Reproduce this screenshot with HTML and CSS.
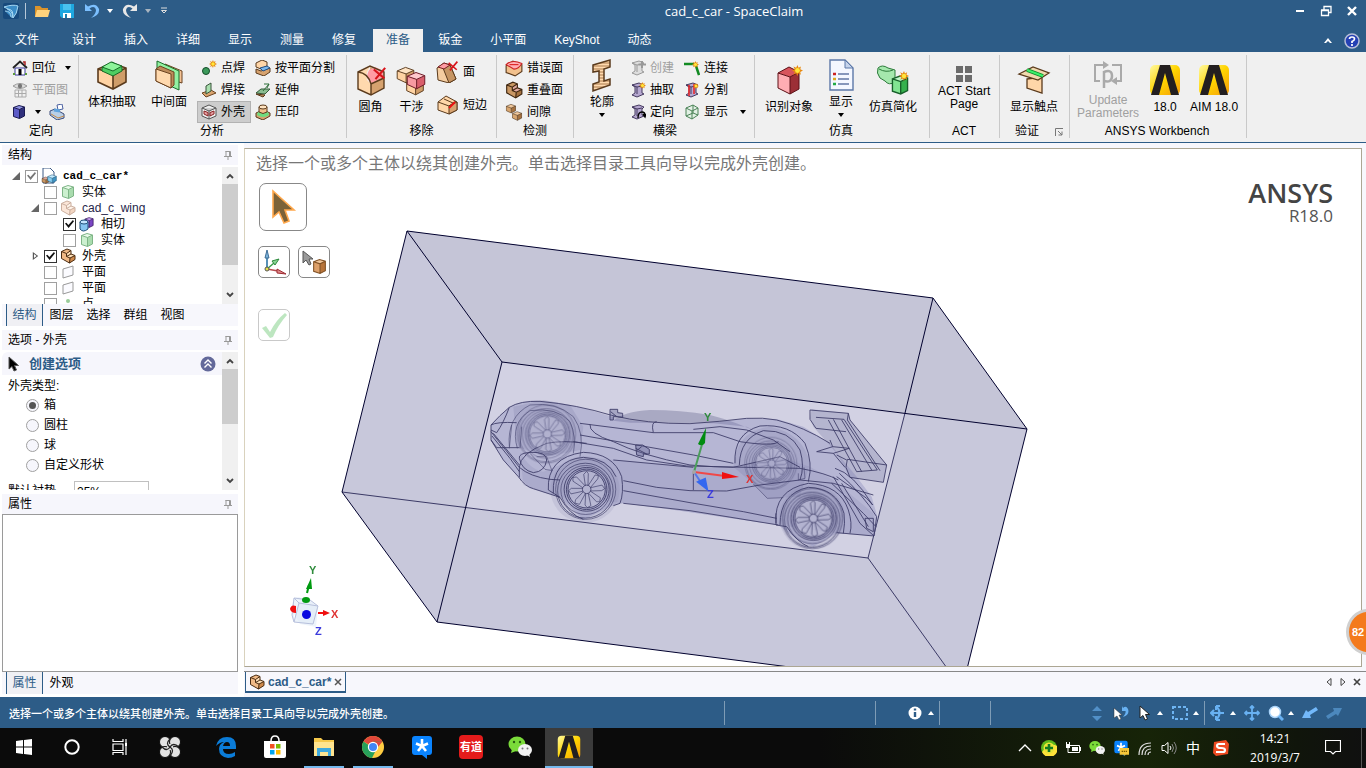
FILE: index.html
```html
<!DOCTYPE html>
<html lang="zh-CN">
<head>
<meta charset="utf-8">
<title>cad_c_car - SpaceClaim</title>
<link rel="stylesheet" href="styles.css">
</head>
<body>
<svg class="sprite" aria-hidden="true">
  <symbol id="box" viewBox="0 0 32 32"><path d="M2 10 16 4 30 9 17 15Z" fill="var(--t)"/><path d="M2 10 17 15V30L2 23Z" fill="var(--l)"/><path d="M17 15 30 9V23L17 30Z" fill="var(--r)"/><path d="M2 10 16 4 30 9V23L17 30 2 23ZM2 10 17 15 30 9M17 15V30" fill="none" stroke="var(--s)" stroke-width="1.6"/></symbol>
  <symbol id="tall" viewBox="0 0 16 16"><path d="M2.500 3.500 8 1.500 13.500 3 8.500 5.500Z" fill="var(--t)"/><path d="M2.500 3.500 8.500 5.500V14.500L2.500 12.500Z" fill="var(--l)"/><path d="M8.500 5.500 13.500 3V12L8.500 14.500Z" fill="var(--r)"/><path d="M2.500 3.500 8 1.500 13.500 3V12L8.500 14.500 2.500 12.500ZM2.500 3.500 8.500 5.500 13.500 3M8.500 5.500V14.500" fill="none" stroke="var(--s)"/></symbol>
  <symbol id="steps" viewBox="0 0 32 32"><path d="M3 7 14 2 22 5V12L30 15V23L19 30 3 21Z" fill="var(--l)"/><path d="M13 11 22 6V12L30 15 20 20 13 17Z" fill="var(--t)"/><path d="M20 20 30 15V23L19 30Z" fill="var(--r)"/><path d="M3 7 14 2 22 5V12L30 15V23L19 30 3 21ZM3 7 13 11 22 5M13 11V17L20 20 30 15M20 20 19 30M13 17 22 12" fill="none" stroke="var(--s)" stroke-width="2"/></symbol>
  <symbol id="ibeam" viewBox="0 0 16 16"><path d="M2 3 9 1 14 3 12 5V11L14 12 7 15 2 13 5 11V5Z" fill="var(--l)" stroke="var(--s)"/><path d="M2 3 7 5V12M7 5 12 4" fill="none" stroke="var(--s)"/></symbol>
  <symbol id="spark" viewBox="0 0 16 16"><path d="M8 0 9.5 4 13 2 12 6 16 8 12 10 13 14 9 12 8 16 6 12 2 14 4 10 0 8 4 6 2 2 6 4Z" fill="#e88a10"/><circle cx="8" cy="8" r="3.5" fill="#ffe63a"/></symbol>
  <symbol id="cross" viewBox="0 0 16 16"><path d="M1 3 14 14M15 1 3 15" stroke="#d8151c" stroke-width="2.6" fill="none"/></symbol>
  <symbol id="ansys" viewBox="0 0 32 32"><defs><linearGradient id="gold" x1="0" y1="0" x2="1" y2="1"><stop offset="0" stop-color="#fff9a0"/><stop offset=".5" stop-color="#ffd400"/><stop offset="1" stop-color="#f59b0c"/></linearGradient></defs><rect x="1" y="1" width="30" height="30" rx="5" fill="url(#gold)"/><path d="M11 1H21L30 31H22L16 9 10 31H2Z" fill="#231f20"/></symbol>
  <symbol id="cursor" viewBox="0 0 16 16"><path d="M3 1V13L6 10.500 8 15 10.500 14 8.500 9.500H12.500Z" fill="var(--l)" stroke="var(--s)"/></symbol>
  <symbol id="pin" viewBox="0 0 10 10"><path d="M2.500 1.500H7.500V6.500M3 1V6.500M1 6.500H9M5 7V10M6.500 1V6" stroke="#999" fill="none"/></symbol>
  <symbol id="plane" viewBox="0 0 16 16"><path d="M3 5 13 2V11L3 14Z" fill="#fbfbff" stroke="#999"/></symbol>
  <symbol id="wechat" viewBox="0 0 24 24"><ellipse cx="9" cy="9" rx="8.500" ry="7.500" fill="#7bdb3a"/><path d="M4 14 3 18 8 16Z" fill="#7bdb3a"/><ellipse cx="17" cy="15" rx="7" ry="6" fill="#f2f2f2"/><path d="M19 20 22 22 21 18Z" fill="#f2f2f2"/><circle cx="6" cy="7" r="1.200" fill="#265c10"/><circle cx="12" cy="7" r="1.200" fill="#265c10"/><circle cx="14.500" cy="13.500" r="1" fill="#777"/><circle cx="19.500" cy="13.500" r="1" fill="#777"/></symbol>
  <symbol id="star" viewBox="0 0 24 24"><path d="M5 1H19Q22 1 22 4V17Q22 20 19 20H17V24L12 20H5Q2 20 2 17V4Q2 1 5 1Z" fill="#0a84ff"/><path d="M12 4V11M6 8.500 12 11 18 8.500M8 16 12 11 16 16" stroke="#fff" stroke-width="2.600" fill="none"/></symbol>
  <symbol id="wheel" viewBox="-100 -100 200 200">
    <g fill="none" stroke="#3b3a66" stroke-width="2.600"><circle r="62" fill="#9c9cc0" fill-opacity=".15"/><circle r="57" fill="#d0d0e6" fill-opacity=".35"/><ellipse rx="69" ry="67"/><ellipse cx="-3" cy="2" rx="76" ry="75" stroke-opacity=".7"/><ellipse cx="-4" cy="4" rx="85" ry="84" stroke-opacity=".85"/><ellipse cx="-3" cy="0" rx="92" ry="92" stroke-opacity=".7"/><circle r="13"/></g>
    <path fill="none" stroke="#3b3a66" stroke-width="2" d="M-4-12-9-46 0-55 5-48 4-12M5-12 26-44 36-42 34-32 12-6M12-5 47-13 55-2 46 4 12 5M12 6 42 26 40 38 30 38 6 12M5 13 13 50 2 56-5 48-3 13M-4 13-22 46-36 42-34 32-11 8M-12 6-48 14-55 4-47-3-13-3M-12-5-42-25-42-36-31-38-6-12"/>
  </symbol>
</svg>

<header class="top">
  <div class="titlebar">
    <div class="quick">
      <svg class="i16" viewBox="0 0 16 16"><rect width="16" height="16" rx="2" fill="#174a7d"/><path d="M1 4Q10 1 15 3 14 11 10 15 11 8 1 4ZM2 8Q8 8 8 14M4 6Q12 6 9 15" fill="#3c8dc7" stroke="#a5d8f4"/></svg>
      <i class="vline"></i>
      <button aria-label="打开"><svg class="i16" viewBox="0 0 16 16"><path d="M1 14V3H6L8 5H14V14Z" fill="#d9932c"/><path d="M1 14 3 7H16L14 14Z" fill="#ffd27c"/></svg></button>
      <button aria-label="保存"><svg class="i16" viewBox="0 0 16 16"><path d="M1 1H15V15H3L1 13Z" fill="#1ea7e0"/><path d="M4 1H12V7H4Z" fill="#49c2ef"/><path d="M4 10H12V15H4Z" fill="#fff"/><path d="M6 11H8V15H6Z" fill="#1b7fae"/></svg></button>
      <button aria-label="撤消"><svg class="i16" viewBox="0 0 16 16"><path d="M1 1V8H8L5.500 5.500Q11 2 12 7 12 11 7 15 16 12 15 6 12-1 4 3.500Z" fill="#7cc0ff"/></svg><i class="down"></i></button>
      <button aria-label="重做"><svg class="i16" viewBox="0 0 16 16"><path d="M15 1V8H8L10.500 5.500Q5 2 4 7 4 11 9 15 0 12 1 6 4-1 12 3.500Z" fill="#e7e7e7"/></svg><i class="down dim"></i></button>
      <button aria-label="自定义"><svg class="i8" viewBox="0 0 8 8"><path d="M1 1H7M1.500 3.500H6.500L4 6Z" stroke="#ddd" fill="none"/></svg></button>
    </div>
    <h1>cad_c_car - SpaceClaim</h1>
    <div class="winctl">
      <button aria-label="最小化"><svg class="i12" viewBox="0 0 12 12"><path d="M2 6H10" stroke="#fff" stroke-width="2"/></svg></button>
      <button aria-label="还原"><svg class="i12" viewBox="0 0 12 12"><path d="M1.500 5.500H8.500V10.500H1.500ZM4 5V1.500H11V7.500H9M1 5H9M4 1.500H11" stroke="#fff" fill="none" stroke-width="1.300"/></svg></button>
      <button aria-label="关闭"><svg class="i12" viewBox="0 0 12 12"><path d="M2 2 10 10M10 2 2 10" stroke="#fff" stroke-width="2.400"/></svg></button>
    </div>
  </div>
  <nav class="tabs">
    <button class="file">文件</button><button>设计</button><button>插入</button><button>详细</button><button>显示</button><button>测量</button><button>修复</button><button class="on">准备</button><button>钣金</button><button>小平面</button><button>KeyShot</button><button>动态</button>
    <span class="tabs-end">
      <button aria-label="折叠功能区"><svg class="i8" viewBox="0 0 8 8"><path d="M0 6 4 1 8 6H6L4 4 2 6Z" fill="#fff"/></svg></button>
      <button aria-label="帮助"><svg class="i16" viewBox="0 0 16 16"><circle cx="8" cy="8" r="7" fill="#2440b4" stroke="#b8bfd8" stroke-width="1.500"/><path d="M5.500 6Q5.500 4 8 4 10.500 4 10.500 6 10.500 7.500 8 8.500V10M8 11V13" stroke="#fff" stroke-width="1.700" fill="none"/></svg></button>
    </span>
  </nav>
</header>

<section class="ribbon">
  <div class="group g-orient">
    <div class="body"><div class="col">
      <button class="sm"><svg class="i16" viewBox="0 0 16 16"><path d="M3 8H13V15H3Z" fill="#fff" stroke="#3b3a99"/><path d="M1 8 8 1.500 15 8" stroke="#222" stroke-width="1.800" fill="none"/><path d="M11 2H13V5" stroke="#a22" stroke-width="1.500" fill="none"/><path d="M6.500 9H9.500V15H6.500Z"/><path d="M1 14H3M13 14H15" stroke="#5a9a3a" stroke-width="2"/></svg>回位<i class="down"></i></button>
      <button class="sm" disabled><svg class="i16" viewBox="0 0 16 16"><path d="M1 4Q8-1 15 4 8 9 1 4Z" fill="#ddd" stroke="#999"/><circle cx="8" cy="4" r="2.200" fill="#777"/><path d="M3 8H14V15H3ZM6.500 8V15M10 8V15M3 11.500H14" stroke="#aaa" fill="none"/></svg>平面图</button>
      <span class="pair">
        <button class="sm" aria-label="视图"><svg class="i16 violet"><use href="#tall"/></svg><i class="down"></i></button>
        <button class="sm" aria-label="对齐"><svg class="i16" viewBox="0 0 16 16"><path d="M1 7 6 5 15 10V14L8 16 1 11Z" fill="#b9cfe6" stroke="#3a4b7b"/><path d="M2 10 9 14 15 12" stroke="#c58b4a" fill="none"/><path d="M8 1 13 0 14 5 9 6Z" fill="#fff" stroke="#4a5fa0"/><path d="M5 6 11 7" stroke="#5fa4de" stroke-width="3"/></svg></button>
      </span>
    </div></div>
    <h2>定向</h2>
  </div>
  <div class="group g-analyse">
    <div class="body">
      <button class="big w58"><svg class="i32 tan" viewBox="0 0 32 32"><use href="#box"/><path d="M6 9 16 3 26 8V12L17 17 6 12Z" fill="#4fce62" stroke="#176d28"/><path d="M6 8 15 3 26 7 17 12Z" fill="#8df49a" stroke="#176d28"/></svg>体积抽取</button>
      <button class="big w56"><svg class="i32" viewBox="0 0 32 32"><path d="M12 5 29 12V24L12 19Z" fill="#f5c497" stroke="#6b4320"/><path d="M4 2 26 12V31L4 21Z" fill="#92f2a2" stroke="#176d28"/><path d="M3 10 7 7 21 13V26L18 29 3 22Z" fill="#bd8b5a" stroke="#6b4320"/><path d="M3 10 18 15V29L3 22Z" fill="#ffd9ae" stroke="#6b4320"/></svg>中间面</button>
      <div class="col">
        <button class="sm"><svg class="i16" viewBox="0 0 16 16"><circle cx="5" cy="11" r="3.500" fill="#3c9a5b" stroke="#144c28"/><use href="#spark" x="8" y="0" width="8" height="8"/></svg>点焊</button>
        <button class="sm"><svg class="i16" viewBox="0 0 16 16"><path d="M1 11 10 8 15 11 5 15Z" fill="#d9a36e" stroke="#6b4320"/><path d="M5 4 10 1V9L5 12Z" fill="#a9dfae" stroke="#39543b"/></svg>焊接</button>
        <button class="sm on"><svg class="i16" viewBox="0 0 16 16"><path d="M1 4 8 1 15 4V12L8 15 1 12ZM1 4 8 7 15 4M8 7V15" fill="#eee" stroke="#555"/><path d="M3 7 7 8.500V12L3 10ZM9 8.500 13 7V10L9 12Z" fill="#e6a0a4" stroke="#822"/></svg>外壳</button>
      </div>
      <div class="col">
        <button class="sm"><svg class="i16" viewBox="0 0 16 16"><path d="M1 3 7 0 12 2V6L6 9 1 7Z" fill="#ffd6a8" stroke="#5a3a1c"/><path d="M1 9 6 11 15 8V12L9 16 1 13Z" fill="#d6a26f" stroke="#5a3a1c"/><path d="M5 8 12 6 15 8 8 11Z" fill="#7db9ee" stroke="#234f82"/></svg>按平面分割</button>
        <button class="sm"><svg class="i16" viewBox="0 0 16 16"><path d="M1 11 6 7H15L10 12Z" fill="#8bbd91" stroke="#345b3a"/><path d="M1 12 10 13 8 15Z" fill="#c99763" stroke="#5a3a1c"/><path d="M8 9 14 2M9 2 14 2 12 6" stroke="#2f6f3a" fill="none"/></svg>延伸</button>
        <button class="sm"><svg class="i16" viewBox="0 0 16 16"><path d="M1 9 8 6 15 9V12L8 16 1 13Z" fill="#d6a26f" stroke="#5a3a1c"/><ellipse cx="8" cy="10" rx="6" ry="3" fill="#6edc80"/><path d="M4 3V8Q8 11 12 8V3Z" fill="#f2c18d" stroke="#5a3a1c"/><ellipse cx="8" cy="3" rx="4" ry="2" fill="#ffe3c0" stroke="#5a3a1c"/></svg>压印</button>
      </div>
    </div>
    <h2>分析</h2>
  </div>
  <div class="group g-remove">
    <div class="body">
      <button class="big low w41"><svg class="i32" viewBox="0 0 32 32"><path d="M3 8 15 3Q10 9 12 16L16 20V31L3 25Z" fill="#ffd9ae"/><path d="M15 3 29 9V24L16 31V20Z" fill="#d6a26f"/><path d="M14 6Q9 15 17 19L29 13V7L20 3Z" fill="#ff9ca4"/><path d="M3 8 15 2 29 8V24L16 31 3 25ZM3 8Q13 9 16 20L29 14M16 20V31" fill="none" stroke="#5a3a1c" stroke-width="1.400"/><use href="#cross" x="18" y="3" width="13" height="13"/></svg>圆角</button>
      <button class="big low w41"><svg class="i32" viewBox="0 0 32 32"><svg class="tan" x="0" y="1" width="19" height="19"><use href="#box"/></svg><svg class="tan" x="9" y="13" width="20" height="19"><use href="#box"/></svg><svg class="rose" x="9" y="6" width="22" height="20"><use href="#box"/></svg></svg>干涉</button>
      <div class="col two">
        <button class="sm mid"><svg class="i22" viewBox="0 0 22 22"><path d="M1 7 8 2 14 4 20 18 13 22 2 19Z" fill="#f5cda0" stroke="#5a3a1c"/><path d="M7 7 14 4 20 18 13 22Z" fill="#c69563" stroke="#5a3a1c"/><path d="M2 6 8 2 14 4 8 8Z" fill="#ff9ca4" stroke="#722"/><use href="#cross" x="12" y="0" width="10" height="10"/></svg>面</button>
        <button class="sm mid"><svg class="i22" viewBox="0 0 22 22"><path d="M2 8 10 2 21 8V16L13 20 2 16Z" fill="#ffd6a8" stroke="#5a3a1c"/><path d="M13 12 21 8V16L13 20Z" fill="#d6a26f" stroke="#5a3a1c"/><path d="M2 8 13 12 20 7M8 5 17 9" stroke="#5a3a1c" fill="none"/><path d="M13 14 19 8" stroke="#e11" stroke-width="2"/></svg>短边</button>
      </div>
    </div>
    <h2>移除</h2>
  </div>
  <div class="group">
    <div class="body"><div class="col">
      <button class="sm"><svg class="i18" viewBox="0 0 16 16"><path d="M1 6 7 2 15 5V11L9 15 1 12Z" fill="#f2c18d" stroke="#5a3a1c"/><path d="M1 5Q6 0 15 4 12 9 8 9Z" fill="#ffb0b6" stroke="#c22"/><path d="M4 5 12 5" stroke="#d22"/></svg>错误面</button>
      <button class="sm"><svg class="i18 brown" viewBox="0 0 32 32"><use href="#steps"/></svg>重叠面</button>
      <button class="sm"><svg class="i18 dark" viewBox="0 0 32 32"><svg x="1" y="0" width="19" height="19"><use href="#box"/></svg><svg x="12" y="13" width="19" height="19"><use href="#box"/></svg></svg>间隙</button>
    </div></div>
    <h2>检测</h2>
  </div>
  <div class="group g-beam">
    <div class="body">
      <button class="big w48"><svg class="i32" viewBox="0 0 32 32"><defs><pattern id="hatch" width="3" height="3" patternUnits="userSpaceOnUse"><rect width="3" height="3" fill="#ffd9ae"/><path d="M0 1H3" stroke="#a97a4c"/></pattern></defs><path d="M7 6 24 1V8L18 10V22L24 20V26L7 32V25L13 23V12L7 13Z" fill="url(#hatch)" stroke="#5a3a1c" stroke-width="1.500"/></svg>轮廓<i class="down"></i></button>
      <div class="col">
        <button class="sm" disabled><svg class="i16 ash" viewBox="0 0 16 16"><use href="#ibeam"/><path d="M12 1V8M8.500 4.500H16" stroke="#999" stroke-width="2"/></svg>创建</button>
        <button class="sm"><svg class="i16 mauve" viewBox="0 0 16 16"><use href="#ibeam"/><use href="#spark" x="9" y="0" width="7" height="7"/></svg>抽取</button>
        <button class="sm"><svg class="i16 mauve" viewBox="0 0 16 16"><use href="#ibeam"/><path d="M8 14Q8 8 12 8 15 8 15 11M13 10 15 13 16 10" stroke="#000" stroke-width="1.400" fill="none"/></svg>定向</button>
      </div>
      <div class="col">
        <button class="sm"><svg class="i16" viewBox="0 0 16 16"><path d="M0 4H10M12 6 15 15" stroke="#128a22" stroke-width="2.500"/><use href="#spark" x="8" y="1" width="7" height="7"/></svg>连接</button>
        <button class="sm"><svg class="i16 mauve" viewBox="0 0 16 16"><use href="#ibeam"/><path d="M5 3V14M10 2V12" stroke="#e22" stroke-width="1.500"/><use href="#spark" x="9" y="1" width="6" height="6"/></svg>分割</button>
        <button class="sm"><svg class="i16" viewBox="0 0 16 16"><path d="M2 4 9 1 14 4V11L8 15 2 12ZM2 4 8 7 14 4M8 7V15M9 1V9L2 12M9 9 14 11" fill="#e2f0e4" stroke="#4a8256"/></svg>显示<i class="down gap"></i></button>
      </div>
    </div>
    <h2>横梁</h2>
  </div>
  <div class="group g-sim">
    <div class="body">
      <button class="big low w58"><svg class="i32 red" viewBox="0 0 32 32"><path d="M5 9 16 3 26 8 17 13Z" fill="var(--t)"/><path d="M5 9 17 13V30L5 24Z" fill="var(--l)"/><path d="M17 13 26 8V25L17 30Z" fill="var(--r)"/><path d="M5 9 16 3 26 8V25L17 30 5 24ZM5 9 17 13 26 8M17 13V30" stroke="var(--s)" fill="none"/><use href="#spark" x="19" y="1" width="11" height="11"/></svg>识别对象</button>
      <button class="big w46"><svg class="i32" viewBox="0 0 32 32"><path d="M5 1H20L28 9V31H5Z" fill="#f4f7ff" stroke="#5c78a8" stroke-width="1.400"/><path d="M20 1V9H28Z" fill="#c6d4ec" stroke="#5c78a8"/><path d="M13 15H24M13 20H24M13 25H24" stroke="#6177a5" stroke-width="1.500"/><path d="M8 15H11" stroke="#c22" stroke-width="2.500"/><path d="M8 20H11" stroke="#da2" stroke-width="2.500"/><path d="M8 25H11" stroke="#2a4" stroke-width="2.500"/></svg>显示<i class="down"></i></button>
      <button class="big low w58"><svg class="i32 green" viewBox="0 0 32 32"><path d="M1 4Q5 0 11 4L18 6V18Q12 22 8 17L3 14Q-1 9 1 4Z" fill="#a5e8ad" stroke="#2c7a3a"/><path d="M2 5Q9 9 16 6" stroke="#2c7a3a" fill="none"/><svg x="12" y="10" width="22" height="22"><use href="#tall"/></svg><use href="#spark" x="22" y="7" width="10" height="10"/></svg>仿真简化</button>
    </div>
    <h2>仿真</h2>
  </div>
  <div class="group g-act">
    <div class="body"><button class="big act w58"><svg class="i16" viewBox="0 0 16 16"><path d="M0 0H7V7H0ZM9 0H16V7H9ZM0 9H7V16H0ZM9 9H16V16H9Z" fill="#6b6b6b"/></svg>ACT Start<br>Page</button></div>
    <h2>ACT</h2>
  </div>
  <div class="group g-act">
    <div class="body"><button class="big low w58"><svg class="i32" viewBox="0 0 32 32"><path d="M9 15 24 13V29L9 24Z" fill="#ffd6a8" stroke="#5a3a1c" stroke-width="1.300"/><path d="M1 10 15 3 31 9 20 16Z" fill="#f0d9ae" stroke="#5a3a1c" stroke-width="1.300"/><path d="M9 6 25 12" stroke="#0d8a2c" stroke-width="4"/><path d="M9 6 25 12" stroke="#3df06a" stroke-width="2"/></svg>显示触点</button></div>
    <h2 class="launch">验证<svg class="i8" viewBox="0 0 8 8"><path d="M.500 8V.500H8M3 3 7 7M7 3.500V7H3.500" stroke="#777" fill="none"/></svg></h2>
  </div>
  <div class="group g-wb">
    <div class="body">
      <button class="big upd w66" disabled><svg class="i32" viewBox="0 0 32 32"><path d="M8 22H3V6H12M20 6H29V22H24" stroke="#aaa" stroke-width="2" fill="none"/><path d="M11 2 17 6 11 10ZM25 18 19 22 25 26Z" fill="#aaa"/><path d="M12 12V29M12 13Q20 10 20 17 20 24 12 22" stroke="#aaa" stroke-width="2.500" fill="none"/></svg>Update<br>Parameters</button>
      <button class="big low w48"><svg class="i32"><use href="#ansys"/></svg>18.0</button>
      <button class="big low w50"><svg class="i32"><use href="#ansys"/></svg>AIM 18.0</button>
    </div>
    <h2>ANSYS Workbench</h2>
  </div>
</section>

<main class="work">
  <aside class="side">
    <div class="head">结构<svg class="i10"><use href="#pin"/></svg></div>
    <div class="scroller tree-box">
      <ul class="tree">
        <li><label><i class="exp open"></i><input type="checkbox" class="soft" checked><svg class="i16" viewBox="0 0 16 16"><path d="M2 0H9L13 4V15H2Z" fill="#fff" stroke="#3d5a86"/><g class="brown"><svg x="0" y="8" width="9" height="8"><use href="#box"/></svg></g><g class="sky"><svg x="6" y="5" width="10" height="11"><use href="#box"/></svg></g></svg><b>cad_c_car*</b></label></li>
        <li class="l1"><label><i class="exp"></i><input type="checkbox"><svg class="i16 mint"><use href="#tall"/></svg>实体</label></li>
        <li class="l1"><label><i class="exp open"></i><input type="checkbox"><svg class="i16 pale"><use href="#steps"/></svg><span>cad_c_wing</span></label></li>
        <li class="l2"><label><i class="exp"></i><input type="checkbox" checked><svg class="i16" viewBox="0 0 16 16"><g class="purple"><svg x="4" y="0" width="12" height="13"><use href="#tall"/></svg></g><path d="M1 6V13Q4 17 9 13V6Z" fill="#86c5f0" stroke="#1d4e78"/><ellipse cx="5" cy="6" rx="4" ry="2" fill="#c4e6ff" stroke="#1d4e78"/></svg>相切</label></li>
        <li class="l2"><label><i class="exp"></i><input type="checkbox"><svg class="i16 mint"><use href="#tall"/></svg>实体</label></li>
        <li class="l1"><label><i class="exp shut"></i><input type="checkbox" checked><svg class="i16 orange"><use href="#steps"/></svg>外壳</label></li>
        <li class="l1"><label><i class="exp"></i><input type="checkbox"><svg class="i16"><use href="#plane"/></svg>平面</label></li>
        <li class="l1"><label><i class="exp"></i><input type="checkbox"><svg class="i16"><use href="#plane"/></svg>平面</label></li>
        <li class="l1"><label><i class="exp"></i><input type="checkbox"><svg class="i16" viewBox="0 0 16 16"><circle cx="8" cy="5" r="2" fill="#9c9"/></svg>点</label></li>
      </ul>
      <div class="bar"><svg class="i8" viewBox="0 0 8 8"><path d="M1 6 4 3 7 6" class="chev"/></svg><i class="thumb t1"></i><svg class="i8" viewBox="0 0 8 8"><path d="M1 2 4 5 7 2" class="chev"/></svg></div>
    </div>
    <nav class="subtabs"><button class="on">结构</button><button>图层</button><button>选择</button><button>群组</button><button>视图</button></nav>
    <div class="head gap-top">选项 - 外壳<svg class="i10"><use href="#pin"/></svg></div>
    <div class="scroller opt-box">
      <div class="opts">
        <div class="opt-head"><svg class="i16 black"><use href="#cursor"/></svg><b>创建选项</b><svg class="i16" viewBox="0 0 16 16"><circle cx="8" cy="8" r="7.500" fill="#63699a"/><path d="M4.500 7.500 8 4 11.500 7.500M4.500 11.500 8 8 11.500 11.500" stroke="#fff" stroke-width="1.400" fill="none"/></svg></div>
        <fieldset>
          <legend>外壳类型:</legend>
          <label><input type="radio" name="shell" checked>箱</label>
          <label><input type="radio" name="shell">圆柱</label>
          <label><input type="radio" name="shell">球</label>
          <label><input type="radio" name="shell">自定义形状</label>
        </fieldset>
        <div class="pad-row"><label for="pad">默认衬垫</label><input id="pad" type="text" value="25%"></div>
      </div>
      <div class="bar"><svg class="i8" viewBox="0 0 8 8"><path d="M1 6 4 3 7 6" class="chev"/></svg><i class="thumb t2"></i><svg class="i8" viewBox="0 0 8 8"><path d="M1 2 4 5 7 2" class="chev"/></svg></div>
    </div>
    <div class="head gap-top">属性<svg class="i10"><use href="#pin"/></svg></div>
    <div class="props"></div>
    <nav class="subtabs"><button class="on">属性</button><button>外观</button></nav>
  </aside>

  <section class="docs">
    <div class="view">
      <svg class="scene" viewBox="245 149 1116 517" preserveAspectRatio="xMinYMin slice">
        <path d="M407 231 933 298 1027 429 962 689 437 622 342 492Z" fill="#c8c8db"/>
        <path d="M407 231 933 298 1027 429 502 362Z" fill="#c5c5d7"/>
        <path d="M502 362 905 413 868 558 466 508Z" fill="#d2d1e3"/>
        <g fill="none" stroke="#3b3a66"><path d="M342 492 868 558 962 689M905 413 868 558"/></g>
        <path d="M407 231 933 298 1027 429 962 689 437 622 342 492ZM407 231 502 362 1027 429M502 362 437 622M933 298 905 413" fill="none" stroke="#00002e"/>
        <g transform="translate(480 380) scale(.33333)" stroke-width="3" stroke-linejoin="round">
          <path d="M400 122Q430 95 510 90 600 90 690 105 770 125 850 165L800 140 700 130 450 128Z" fill="#8e8eae" fill-opacity=".6"/>
          <path d="M33 135 Q60 105 88 82 Q120 60 180 62 Q250 66 330 90 L420 118 520 128 630 131 720 125 800 115 890 117 970 140 1050 190 1080 230 1130 290 1175 350 1192 410 1185 468 1070 460 1000 500 960 485 895 435 600 392 430 370 400 375 310 420 240 352 150 325 115 290 70 240 33 180Z" fill="#7d7db4" fill-opacity=".32"/>
          <path d="M120 215Q150 270 190 275L300 230 630 260 760 265 900 230 990 260 1060 300 1180 400 1185 468 1070 460 895 435 600 392 430 370 240 352 130 315Z" fill="#5f5f98" fill-opacity=".12"/>
          <path d="M100 80 190 60 270 75 310 140 300 210 200 230 110 200Z" fill="#74749e" fill-opacity=".2"/>
          <path d="M760 260Q770 150 870 140 970 160 990 250L960 350 860 355 830 320Z" fill="#74749e" fill-opacity=".2"/>
          <path d="M995 88 1105 100 1110 120 1220 255 1210 307 1110 292 1070 220 1000 140 990 115Z" fill="#7878a6" fill-opacity=".32"/>
          <ellipse cx="315" cy="328" rx="104" ry="100" fill="#77779f" fill-opacity=".15"/>
          <ellipse cx="996" cy="412" rx="98" ry="98" fill="#77779f" fill-opacity=".15"/>
          <g fill="none" stroke="#3b3a66" stroke-width="2.600">
            <path d="M33 135 Q60 105 88 82 Q120 62 180 64 Q290 74 395 106 500 132 630 131 720 125 800 115 850 112 890 120 970 140 1050 190M33 135V180L70 240 115 290 Q135 320 160 326L240 352M33 135 Q50 125 110 128M33 150 50 158Q70 130 88 82M33 155 118 262V292M40 160 118 255M33 180 50 203H118M36 168 90 235 118 275M118 262Q150 290 210 298L240 300"/>
            <path d="M300 130 520 158 700 158 780 185Q880 200 895 185M330 133Q325 160 400 185 480 225 630 255L700 260 760 262 900 230 960 262M280 185 400 205 500 240 620 258 800 262 960 265Q1040 280 1075 300M430 302 530 322 630 332 740 333 840 315 960 300 1060 310 1180 345M430 332 630 368 790 395 890 415M430 370 630 392 895 435M400 240 640 262M300 165 640 225 760 250M640 275V330M520 158Q512 125 530 125M640 148 720 140 800 150 880 180 930 215"/>
            <path d="M118 235Q115 220 150 217 200 215 200 240 195 275 160 278 125 270 118 235ZM118 262Q120 220 200 190 250 180 320 190"/>
            <path d="M205 330Q200 232 310 217 400 220 425 290 432 340 420 370L400 377M220 340Q215 240 310 232 385 235 408 290M205 330 240 352Q270 405 310 418"/>
            <path d="M888 430Q880 330 985 310 1080 315 1105 390 1118 430 1110 460M900 435Q900 340 985 322 1070 325 1092 400 1096 430 1090 460M888 400V435L920 440Q950 485 985 500"/>
            <path d="M765 250Q760 160 840 138 930 130 975 190 1000 250 985 305M778 255Q780 175 850 152 930 150 960 210 975 260 960 300"/>
            <path d="M88 200Q80 110 150 75 230 65 280 110 315 160 300 230M112 205Q90 130 150 92 230 80 270 125 290 170 280 220M95 135 88 205M125 140 120 205" stroke-opacity=".65"/>
            <path d="M990 90 1105 100 1110 120 1220 255 1210 307 1110 292 1098 262 1102 238 1220 255M990 90V118L1008 145 1098 155M1105 100 1102 120 1200 272M1008 112 1092 118 1192 270 1130 275 1045 120M1060 118 1145 275M1085 120 1175 270"/>
            <path d="M1010 215 1058 200 1108 205 1060 220ZM1058 200 1050 180M1060 220 1095 262M1070 225 1100 240M1065 265Q1120 280 1178 375L1160 355 1070 290M1078 280Q1150 345 1190 410L1182 468 1070 458M1060 290 1140 430 1182 468M1085 310 1165 440M1055 310 1150 400 1188 440M1155 415H1180V455L1160 445Z"/>
            <path d="M390 88H413V98L428 100V112L400 110V120H390ZM392 95 410 110M467 195H488L508 208V222H490V230L470 225ZM467 205 500 222M470 212 485 200" fill="#57578a" fill-opacity=".35"/>
            <path d="M150 220 195 268 218 272M820 312 862 355 910 353M955 280V300L975 295 972 262M170 230H200L215 270" stroke-opacity=".6"/>
          </g>
          <g opacity=".65"><use href="#wheel" x="107" y="67" width="190" height="190"/><use href="#wheel" x="790" y="165" width="170" height="170"/></g>
          <use href="#wheel" x="222" y="230" width="196" height="196"/>
          <use href="#wheel" x="902" y="317" width="196" height="196"/>
        </g>
        <path d="M694 472 703 441" stroke="#4a9e5a" stroke-width="2"/><path d="M706 428 698 444Q702 447 705 443Z" fill="#008c10"/>
        <path d="M694 472 725 476" stroke="#f04848" stroke-width="2"/><path d="M739 477 722 472V479Z" fill="#f01010"/>
        <path d="M694 472 700 481" stroke="#5578e8" stroke-width="2"/><path d="M698 482 707 489 705 479Z" fill="#3468f0" stroke="#3468f0" stroke-width="2"/>
        <circle cx="694" cy="472" r="2" fill="#a6a6a6"/>
        <text x="704" y="421" class="ax ok">Y</text><text x="746" y="483" class="ax hot">X</text><text x="707" y="498" class="ax cool">Z</text>
        <path d="M294 598 299 597 318 606 316 627 300 624 291 609Z" fill="#eef4fb"/><path d="M294 622 299 603 318 606 313 624ZM294 598 299 603M294 598 310 600 318 606M294 598 292 615 294 622" fill="#dfeaf6" fill-opacity=".6" stroke="#b7c0dc"/>
        <path d="M290 609Q291 604 296 606V613Q291 613 290 609Z" fill="#f01010"/><ellipse cx="306" cy="600" rx="4" ry="3" fill="#009a10"/><circle cx="306.500" cy="614.500" r="4.500" fill="#0a0ae0"/>
        <path d="M307 593 309 585" stroke="#009a10" stroke-width="2"/><path d="M311 578 306 589H312Z" fill="#009a10"/><path d="M318 612H323V610L330 613 323 616V614H318Z" fill="#f01010"/>
        <text x="309" y="574" class="ax ok">Y</text><text x="331" y="618" class="ax hot">X</text><text x="315" y="635" class="ax cool">Z</text>
      </svg>
      <div class="overlay">
        <p class="hint">选择一个或多个主体以绕其创建外壳。单击选择目录工具向导以完成外壳创建。</p>
        <div class="guides">
          <button class="guide large" aria-label="选择"><svg class="i32" viewBox="0 0 32 32"><path d="M6 0V26L12 21 17 32 22 30 18 19H27Z" fill="#7c6238" stroke="#ffa84c" stroke-width="1.600"/></svg></button>
          <div class="guide-row">
            <button class="guide" aria-label="定向"><svg class="i26" viewBox="0 0 26 26"><path d="M6 20V7" stroke="#5790b6" stroke-width="2"/><path d="M6 1 4 9H8Z" fill="#7fb6dc" stroke="#3d6c94"/><path d="M6 20 13 14" stroke="#3aa04c" stroke-width="1.500"/><path d="M18 10 11 12 14 16Z" fill="#88d494" stroke="#2d8a3d"/><path d="M6 20 17 22" stroke="#b5484c" stroke-width="1.500"/><path d="M25 25 16 20V24Z" fill="#e08a8c" stroke="#9c2a30"/><circle cx="6" cy="20" r="2" fill="#e6e04a" stroke="#555"/></svg></button>
            <button class="guide" aria-label="选择主体"><svg class="i26" viewBox="0 0 26 26"><path d="M2 2V14L5 11 8 16 10 15 8 10H12Z" fill="#999" stroke="#555"/><g class="copper"><svg x="10" y="9" width="17" height="17"><use href="#tall"/></svg></g></svg></button>
          </div>
          <button class="guide faint" aria-label="完成"><svg class="i26" viewBox="0 0 26 26"><path d="M1 16 5 14 9 20Q15 8 24 1L26 3Q17 13 12 25L9 26Z" fill="#6fca76"/></svg></button>
        </div>
        <div class="brand"><strong>ANSYS</strong><span>R18.0</span></div>
      </div>
    </div>
    <div class="doctabs">
      <button class="doctab"><svg class="i16 orange"><use href="#steps"/></svg>cad_c_car*<svg class="i8" viewBox="0 0 8 8"><path d="M1 1 7 7M7 1 1 7" stroke="#555" stroke-width="1.500"/></svg></button>
      <span class="docnav"><button aria-label="上一个"><svg class="i8" viewBox="0 0 8 8"><path d="M6 .500V7.500L2 4Z" fill="none" stroke="#444"/></svg></button><button aria-label="下一个"><svg class="i8" viewBox="0 0 8 8"><path d="M2 .500V7.500L6 4Z" fill="none" stroke="#444"/></svg></button><button aria-label="关闭"><svg class="i8" viewBox="0 0 8 8"><path d="M1 1 7 7M7 1 1 7" stroke="#444" stroke-width="1.700"/></svg></button></span>
    </div>
  </section>
  <div class="badge">82</div>
</main>

<footer class="status">
  <p>选择一个或多个主体以绕其创建外壳。单击选择目录工具向导以完成外壳创建。</p>
  <span class="cell c151"></span>
  <span class="cell c63"><svg class="i14" viewBox="0 0 14 14"><circle cx="7" cy="7" r="6.500" fill="#fff"/><path d="M7 6V11M7 2.500V4.500" stroke="#2d5c87" stroke-width="2.400"/></svg><i class="up"></i></span>
  <span class="cell c51"></span>
  <div class="cell tools">
    <svg class="i16" viewBox="0 0 16 16"><path d="M3 6 8 1 13 6ZM3 11 8 16 13 11Z" fill="#5290c8"/></svg>
    <svg class="i16" viewBox="0 0 16 16"><path d="M1 3V13L4 11 6 15 8 14 6 10H9Z" fill="#fff" stroke="#333" stroke-width=".500"/><path d="M9 1V6H13L12 5Q14 8 10 12 17 10 15 4 13 0 10 3Z" fill="#68b1f2"/></svg>
    <span class="tool"><svg class="i16 white"><use href="#cursor"/></svg><i class="up"></i></span>
    <span class="tool"><svg class="i18" viewBox="0 0 18 18"><path d="M2 3H16V15H2Z" fill="none" stroke="#6eb4f2" stroke-width="2" stroke-dasharray="3 2"/></svg><i class="up"></i></span>
    <i class="vline"></i>
    <span class="tool"><svg class="i16" viewBox="0 0 16 16"><path d="M6 1Q13 8 6 15M6 1V5M6 1H10M6 15V11M6 15H10M1 8H14M4 5 1 8 4 11" fill="none" stroke="#68b1f2" stroke-width="2"/></svg><i class="up"></i></span>
    <svg class="i16" viewBox="0 0 16 16"><path d="M8 1V15M1 8H15M6 3 8 1 10 3M6 13 8 15 10 13M3 6 1 8 3 10M13 6 15 8 13 10" fill="none" stroke="#68b1f2" stroke-width="1.800"/></svg>
    <span class="tool"><svg class="i16" viewBox="0 0 16 16"><circle cx="7" cy="7" r="5.500" fill="#fff" stroke="#a9d4fa" stroke-width="1.500"/><path d="M11 11 15 15" stroke="#68b1f2" stroke-width="3"/></svg><i class="up"></i></span>
    <svg class="i16" viewBox="0 0 16 16"><path d="M14 2 16 5 8 10 9 13 0 13 4 5 6 7Z" fill="#72b8fa"/></svg>
    <svg class="i16" viewBox="0 0 16 16"><path d="M2 14 0 11 8 6 7 3 16 3 12 11 10 9Z" fill="#4c88bd"/></svg>
  </div>
</footer>

<nav class="taskbar">
  <button aria-label="开始"><svg class="i16" viewBox="0 0 16 16"><path d="M0 2 7 1V7.500H0ZM8 1 16 0V7.500H8ZM0 8.500H7V15L0 14ZM8 8.500H16V16L8 15Z" fill="#fff"/></svg></button>
  <button aria-label="Cortana"><svg class="i16" viewBox="0 0 16 16"><circle cx="8" cy="8" r="6.700" fill="none" stroke="#fff" stroke-width="2"/></svg></button>
  <button aria-label="任务视图"><svg class="i16" viewBox="0 0 16 16"><path d="M1 0V2.500H11V0M1 5H11V11.500H1ZM1 16V13.500H11V16M14 0V16" fill="none" stroke="#fff" stroke-width="1.200"/><path d="M13 4H15V7H13Z" fill="#fff"/></svg></button>
  <button class="wide" aria-label="工具"><svg class="i22" viewBox="0 0 22 22"><g fill="#e3e3e3" stroke="#0b0b0b"><circle cx="6" cy="6" r="5.500"/><circle cx="16" cy="6" r="5.500"/><circle cx="16" cy="16" r="5.500"/><circle cx="6" cy="16" r="5.500"/></g><path d="M8 8H14V14H8Z" fill="#e3e3e3"/><path d="M11 3Q6 8 11 11 16 14 11 20M3 11Q8 16 11 11 14 6 20 11" fill="none" stroke="#222" stroke-width="1.300"/></svg></button>
  <button class="edge" aria-label="Edge"><svg class="i22" viewBox="0 0 22 22"><path d="M1 10Q3 1 12 1 21 1 21 10V13H8Q8 18 14 18 17 18 20 16V20Q17 22 13 22 4 21 4 13 4 8 9 6 5 6 1 10ZM8 10H15Q15 6 12 6 9 6 8 10Z" fill="#0b7cd8" fill-rule="evenodd"/></svg></button>
  <button aria-label="商店"><svg class="i24" viewBox="0 0 24 24"><path d="M1 6H23V21Q23 23 21 23H3Q1 23 1 21Z" fill="#fff"/><path d="M8 6Q8 1 12 1 16 1 16 6" fill="none" stroke="#fff" stroke-width="1.500"/><path d="M7 9H11.500V13.500H7Z" fill="#f25022"/><path d="M13 9H17.500V13.500H13Z" fill="#7fba00"/><path d="M7 15H11.500V19.500H7Z" fill="#00a4ef"/><path d="M13 15H17.500V19.500H13Z" fill="#ffb900"/></svg></button>
  <button class="run" aria-label="文件资源管理器"><svg class="i22" viewBox="0 0 22 22"><path d="M1 2H8L10 4H21V20H1Z" fill="#f6c94b"/><path d="M1 6H21V20H1Z" fill="#ffe48f"/><path d="M4 20V12H18V20H15V16H7V20Z" fill="#3fa9dd"/></svg></button>
  <button class="run" aria-label="Chrome"><svg class="i22" viewBox="0 0 22 22"><circle cx="11" cy="11" r="11" fill="#ffcd42"/><path d="M11 11 1.500 5.500A11 11 0 0 1 20.500 5.500Z" fill="#e0473a"/><path d="M11 11 20.500 5.500H11ZM1.500 5.500A11 11 0 0 0 10 22L14 14Z" fill="#27a05a"/><path d="M11 5.500H20.500L16 11Z" fill="#e0473a"/><circle cx="11" cy="11" r="5.200" fill="#fff"/><circle cx="11" cy="11" r="4" fill="#4285f4"/></svg></button>
  <button aria-label="聊天"><svg class="i24"><use href="#star"/></svg></button>
  <button aria-label="有道"><span class="youdao">有道</span></button>
  <button aria-label="微信"><svg class="i24"><use href="#wechat"/></svg></button>
  <button class="active" aria-label="SpaceClaim"><svg class="i24"><use href="#ansys"/></svg></button>
  <div class="tray">
    <svg class="i16" viewBox="0 0 16 16"><path d="M2 11 8 5 14 11" fill="none" stroke="#fff" stroke-width="1.400"/></svg>
    <svg class="i16" viewBox="0 0 16 16"><circle cx="8" cy="8" r="8" fill="#5db81c"/><path d="M1 12A8 8 0 0 0 16 6Q9 2 1 12Z" fill="#ffe23a"/><circle cx="8" cy="8" r="5.500" fill="#e8e436"/><path d="M8 4V12M4 8H12" stroke="#117a22" stroke-width="2.600"/></svg>
    <svg class="i16" viewBox="0 0 16 16"><path d="M5 5.500H14.500V12.500H4" fill="none" stroke="#fff"/><path d="M7 7H13V11H7ZM15 7H16V11H15ZM1 4H5V8H1ZM1 2H2V4H1ZM4 2H5V4H4Z" fill="#fff"/><path d="M3 8V12.500H5" stroke="#fff" fill="none"/></svg>
    <svg class="i16"><use href="#wechat"/></svg>
    <svg class="i16" viewBox="0 0 24 24"><use href="#star"/><path d="M10 12H24V22H19L17 24V22H10Z" fill="#f5c63a"/><path d="M13 17H21" stroke="#7a5a00" stroke-width="2" stroke-dasharray="2 1"/></svg>
    <svg class="i16" viewBox="0 0 16 16"><path d="M2 15Q2 3 14 3M5 15Q5 6 14 6M8 15Q8 9 14 9M11 15Q11 12 14 12" fill="none" stroke="#ddd" stroke-width="1.200"/></svg>
    <svg class="i16" viewBox="0 0 16 16"><path d="M1 5.500H3.500L7 2.500V13.500L3.500 10.500H1Z" fill="none" stroke="#fff"/><path d="M9 6Q11 8 9 10" fill="none" stroke="#fff"/><path d="M11 4Q14 8 11 12M13 2Q17.500 8 13 14" fill="none" stroke="#888"/></svg>
    <span class="ime">中</span>
    <svg class="i16" viewBox="0 0 16 16"><path d="M1 2 13 0 16 4 15 14 3 16 0 13Z" fill="#ee4b22"/><path d="M12 4H6Q4 4 4 6 4 8 8 8 12 8 12 10 12 12 10 12H3" fill="none" stroke="#fff" stroke-width="2.200"/></svg>
  </div>
  <time><span>14:21</span><span>2019/3/7</span></time>
  <button class="note" aria-label="通知"><svg class="i16" viewBox="0 0 16 16"><path d="M.500 1.500H15.500V12.500H10.500L8 15 5.500 12.500H.500Z" fill="none" stroke="#fff" stroke-width="1.200"/></svg></button>
  <i class="peek"></i>
</nav>
</body>
</html>
```
FILE: styles.css
```css
* { box-sizing: border-box; }
html, body { height: 100%; }
body {
  margin: 0; display: flex; flex-direction: column; overflow: hidden;
  font: 12px/16px "Liberation Sans", "Noto Sans CJK SC", sans-serif;
  color: #000; background: #f7f7fc;
}
button { font: inherit; color: inherit; background: none; border: 0; padding: 0; display: flex; align-items: center; justify-content: center; white-space: nowrap; }
h1, h2, p, ul, fieldset { margin: 0; padding: 0; border: 0; font-weight: 400; }
svg { flex: none; }
.sprite { position: absolute; width: 0; height: 0; }
.i8 { width: 8px; height: 8px; } .i10 { width: 10px; height: 10px; } .i12 { width: 12px; height: 12px; }
.i14 { width: 14px; height: 14px; } .i16 { width: 16px; height: 16px; } .i18 { width: 18px; height: 18px; }
.i22 { width: 22px; height: 22px; } .i24 { width: 24px; height: 24px; } .i26 { width: 26px; height: 26px; }
.i32 { width: 32px; height: 32px; overflow: visible; }

.tan { --t: #ffe4c4; --l: #ffd3a3; --r: #cf9d69; --s: #5a3a1c; }
.dark { --t: #f0c89c; --l: #d8a670; --r: #a5713f; --s: #3e2610; }
.brown { --t: #e0a9a0; --l: #c99763; --r: #a5713f; --s: #3e2610; }
.orange { --t: #ffe0b8; --l: #f0b986; --r: #cf8a4c; --s: #4a2c12; }
.pale { --t: #fff4ea; --l: #fbe6d8; --r: #f2d5c1; --s: #cbaf9f; }
.mint { --t: #e9fbe9; --l: #ccf0cf; --r: #a9dcae; --s: #7fb587; }
.violet { --t: #8f93e0; --l: #5d5cc8; --r: #2f2f7c; --s: #1b1b52; }
.purple { --t: #c9a4f5; --l: #a478e6; --r: #7b46c4; --s: #35155f; }
.sky { --t: #c4ecff; --l: #86cdf0; --r: #3f95c4; --s: #1b4e70; }
.rose { --t: #ffc8cc; --l: #f79aa2; --r: #d95e6c; --s: #6e1c28; }
.red { --t: #d8545c; --l: #ffadb3; --r: #9c2f36; --s: #5c1016; }
.green { --t: #c0f7c8; --l: #82e592; --r: #35b14d; --s: #17602a; }
.copper { --t: #f2c79c; --l: #dda06a; --r: #b8743a; --s: #805024; }
.mauve { --l: #b6a8d0; --s: #453a60; }
.ash { --l: #ddd; --s: #999; }
.black { --l: #000; --s: #555; }
.white { --l: #fff; --s: #222; }

.down, .up { width: 0; height: 0; border: 3px solid transparent; flex: none; }
.down { border-top: 4px solid currentColor; border-bottom: 0; }
.up { border-bottom: 4px solid #fff; border-top: 0; }
.vline { width: 1px; height: 16px; background: #b7c8d8; }

.top { background: #2d5c87; color: #fff; }
.titlebar { display: flex; align-items: center; height: 22px; }
.quick { width: 181px; display: flex; align-items: center; gap: 9px; padding-left: 3px; }
.quick .vline { margin: 0 -1px 0 -3px; }
.quick button { gap: 7px; }
.quick .dim { color: #a9b5c0; }
.titlebar h1 { flex: 1; text-align: center; font: 13px/22px "Open Sans", "Noto Sans CJK SC", sans-serif; }
.winctl { display: flex; padding-right: 1px; }
.winctl button { width: 26px; height: 22px; }
.tabs { display: flex; align-items: flex-end; height: 30px; }
.tabs button { height: 23px; padding: 0 14px 2px; }
.tabs .file { padding: 0 19px 2px 15px; }
.tabs .on { background: #f0f0f0; color: #2d5c87; padding: 0 13px 2px; margin: 0 1px 0 3px; }
.tabs-end { margin-left: auto; display: flex; padding-right: 6px; }
.tabs-end .i8, .tabs-end .i16 { margin-left: 12px; }
.tabs-end button { padding: 0; }

.ribbon { display: flex; height: 91px; padding-top: 3px; background: #f0f0f0; border-bottom: 1px solid #2d5c87; }
.group { display: flex; flex-direction: column; padding: 0 4px; border-right: 1px solid #c9c9c9; margin-bottom: 4px; flex: none; }
.g-orient { padding: 0 4px 0 8px; }
.g-analyse { padding: 0 5px 0 4px; }
.g-remove { padding: 0 3px; }
.g-beam { padding: 0 2px 0 4px; }
.g-sim { padding: 0 7px 0 5px; }
.g-act { padding: 0 6px 0 5px; }
.g-wb { padding: 0 7px 0 5px; }
.body { display: flex; height: 68px; padding-top: 2px; }
.group h2 { font-size: 12px; line-height: 17px; text-align: center; }
.launch { display: flex; justify-content: flex-end; align-items: center; gap: 16px; }
.col { display: flex; flex-direction: column; align-items: flex-start; }
.sm { height: 22px; padding: 0 6px 0 4px; gap: 4px; }
.sm.on { background: #cdcdcd; outline: 1px solid #b2b2b2; outline-offset: -1px; }
.sm .down { margin-left: 5px; margin-right: -6px; }
.sm .gap { margin-left: 8px; margin-right: 0; }
.pair { display: flex; } .pair .sm:first-child { padding-right: 11px; } .pair .sm { padding-left: 3px; } .pair .down { margin-left: 4px; }
.two { gap: 6px; } .mid { height: 27px; gap: 5px; padding-top: 3px; }
.big { flex-direction: column; justify-content: flex-start; padding-top: 2px; height: 66px; line-height: 16px; }
.big svg { margin-bottom: 3px; }
.big .down { margin-top: 3px; }
.big.low { padding-top: 7px; }
.big.act { padding-top: 9px; line-height: 13px; }
.big.upd { line-height: 13px; }
.big:disabled, .sm:disabled { color: #a0a0a0; }
.w41 { width: 41px; } .w46 { width: 46px; } .w48 { width: 48px; } .w50 { width: 50px; } .w56 { width: 56px; } .w58 { width: 58px; } .w66 { width: 66px; }

.work { flex: 1; min-height: 0; display: flex; position: relative; }
.side { width: 244px; flex: none; display: flex; flex-direction: column; padding: 2px 6px 3px 2px; background: #fff; }
.head { display: flex; align-items: center; justify-content: space-between; height: 20px; padding: 0 5px 0 6px; background: #f6f6fc; flex: none; }
.gap-top { margin-top: 4px; }
.scroller { display: flex; margin-top: 2px; overflow: hidden; flex: none; }
.tree-box { height: 137px; } .opt-box { height: 138px; }
.tree { flex: 1; list-style: none; padding-top: 1px; background: #fff; }
.tree label { display: flex; align-items: center; height: 16px; padding-left: 10px; white-space: nowrap; }
.tree .l1 label { padding-left: 29px; } .tree .l2 label { padding-left: 48px; }
.tree svg { margin: 0 6px 0 3px; }
.tree b { font: bold 11px/16px "Liberation Mono", monospace; }
.tree span { color: #26264a; }
.exp { width: 9px; height: 8px; margin-right: 4px; }
.exp.open { background: #666; clip-path: polygon(100% 0, 100% 100%, 0 100%); width: 8px; margin-right: 5px; }
.exp.shut { background: #555; clip-path: polygon(20% 0, 80% 50%, 20% 100%, 20% 0, 33% 25%, 33% 75%, 62% 50%, 33% 25%); }
input[type=checkbox], input[type=radio] { appearance: none; margin: 0; width: 13px; height: 13px; border: 1px solid #a0a0a0; background: #fff; display: grid; place-items: center; flex: none; }
input[type=checkbox]:checked { border-color: #333; }
input[type=checkbox]:checked::after { content: ""; width: 9px; height: 9px; background: #111; clip-path: polygon(0 45%, 15% 35%, 38% 62%, 88% 5%, 100% 20%, 40% 95%); }
input[type=checkbox].soft:checked { border-color: #999; }
input.soft:checked::after { background: #777; }
.bar { width: 16px; display: flex; flex-direction: column; align-items: center; background: #f0f0f0; padding: 5px 0; }
.chev { fill: none; stroke: #444; stroke-width: 1.8; }
.thumb { width: 100%; background: #cdcdcd; margin: 4px 0 auto; }
.t1 { height: 81px; } .t2 { height: 55px; }
.subtabs { display: flex; flex: none; height: 22px; padding-left: 4px; background: #f7f7fc; }
.subtabs button { width: 37px; padding-bottom: 1px; }
.subtabs .on { color: #2d5c87; background: #f0f0f4; border: solid #2d5c87; border-width: 0 1px; }
.opts { flex: 1; min-width: 0; }
.opt-head { display: flex; align-items: center; height: 23px; padding: 0 6px 0 4px; background: #f6f6fc; border-radius: 6px 0 0 0; color: #2d5c87; }
.opt-head b { font-size: 13px; margin: 0 auto 0 7px; }
.opts fieldset { display: flex; flex-direction: column; padding-left: 6px; }
.opts legend { padding: 2px 0 0; line-height: 18px; }
.opts fieldset label { display: flex; align-items: center; gap: 5px; height: 20px; padding-left: 18px; }
input[type=radio] { border-radius: 50%; background: #f6f6fc; }
input[type=radio]:checked::after { content: ""; width: 7px; height: 7px; border-radius: 50%; background: #555; }
.pad-row { display: flex; align-items: flex-start; gap: 18px; padding: 6px 0 0 6px; }
.pad-row label { line-height: 20px; }
.pad-row input { width: 75px; height: 21px; border: 1px solid #c0c0c0; padding: 0 2px; font: inherit; }
.props { flex: 1; border: 1px solid #9a9a9a; background: #fff; }

.docs { flex: 1; min-width: 0; display: flex; flex-direction: column; padding-top: 5px; }
.view { flex: 1; min-height: 0; position: relative; margin-right: 4px; background: #fff; border: 1px solid #aca693; border-left-color: #d9d2bd; overflow: hidden; }
.scene { position: absolute; inset: 0; width: 100%; height: 100%; }
.ax { font: bold 11px "Liberation Sans", sans-serif; }
.ok { fill: #2f8b3c; } .hot { fill: #e03434; } .cool { fill: #3c3cdc; }
.overlay { position: relative; display: grid; grid-template-columns: 1fr auto; padding: 3px 28px 0 11px; }
.hint { grid-column: 1 / 3; font-size: 16px; line-height: 24px; color: #777; }
.guides { padding: 7px 0 0 2px; }
.guide { width: 32px; height: 32px; border: 1px solid #888; border-radius: 5px; background: #fff; }
.guide.large { width: 48px; height: 48px; margin-left: 1px; border-radius: 7px; }
.guide-row { display: flex; gap: 8px; margin: 15px 0 31px; }
.faint { opacity: .45; }
.brand { display: flex; flex-direction: column; align-items: flex-end; padding-top: 3px; color: #555; font-family: "Open Sans", sans-serif; }
.brand strong { font-size: 27px; line-height: 28px; font-weight: 600; color: #444; }
.brand span { font-size: 17px; line-height: 18px; }
.doctabs { display: flex; align-items: flex-start; justify-content: space-between; height: 26px; margin-top: 4px; border-top: 1px solid #888; }
.doctab { height: 21px; gap: 3px; padding: 0 3px; margin-left: 1px; border: 1px solid #2d5c87; border-top: 0; border-bottom-width: 2px; font-weight: 700; color: #2d5c87; }
.docnav { display: flex; gap: 6px; padding: 6px 5px 0 0; }
.badge { position: absolute; right: -24px; top: 466px; width: 44px; height: 46px; border: 3px solid #d0d0d0; border-radius: 50%; background: #f47a1c; color: #fff; font: bold 11px/40px "Liberation Sans", sans-serif; padding-left: 3px; }

.status { display: flex; align-items: center; height: 31px; flex: none; background: #2d5c87; color: #fff; font-size: 11px; }
.status p { flex: 1; padding: 2px 0 0 9px; font-weight: 500; white-space: nowrap; }
.cell { height: 24px; border-left: 1px solid #7e9cb6; display: flex; align-items: center; gap: 6px; }
.c151 { width: 151px; } .c63 { width: 64px; padding-left: 32px; } .c51 { width: 51px; }
.tools { width: 376px; justify-content: flex-end; gap: 8px; padding-right: 24px; }
.tools .vline { height: 24px; margin: 0 -3px; background: #7e9cb6; }
.tool { display: flex; align-items: center; gap: 4px; }

.taskbar { display: flex; align-items: stretch; flex: none; height: 40px; color: #fff; background: #0b0b0b linear-gradient(90deg, transparent 60%, #172408 84%, #10150b 95%, #101010); }
.taskbar button { width: 48px; border-bottom: 2px solid transparent; }
.taskbar .wide { width: 52px; }
.taskbar .edge { margin-left: 6px; }
.taskbar .edge ~ button { margin-left: 1px; }
.taskbar .run { background: linear-gradient(#76b9ed, #76b9ed) 4px 100% / 40px 2px no-repeat border-box; }
.taskbar .active { background: #3b3b3b; border-bottom-color: #76b9ed; }
.youdao { width: 24px; height: 24px; border-radius: 4px; background: #e41b1b; font: bold 11px/23px "Noto Sans CJK SC", sans-serif; }
.tray { display: flex; align-items: center; gap: 8px; margin-left: auto; }
.ime { font-size: 14px; width: 16px; text-align: center; }
.tray svg:last-child { margin-left: 4px; }
time { display: flex; flex-direction: column; justify-content: center; align-items: center; width: 92px; font: 12px/19px "Open Sans", sans-serif; }
.taskbar .note { width: 22px; margin-left: 0; }
.peek { width: 1px; background: #555; margin: 0 4px 0 17px; }
```
